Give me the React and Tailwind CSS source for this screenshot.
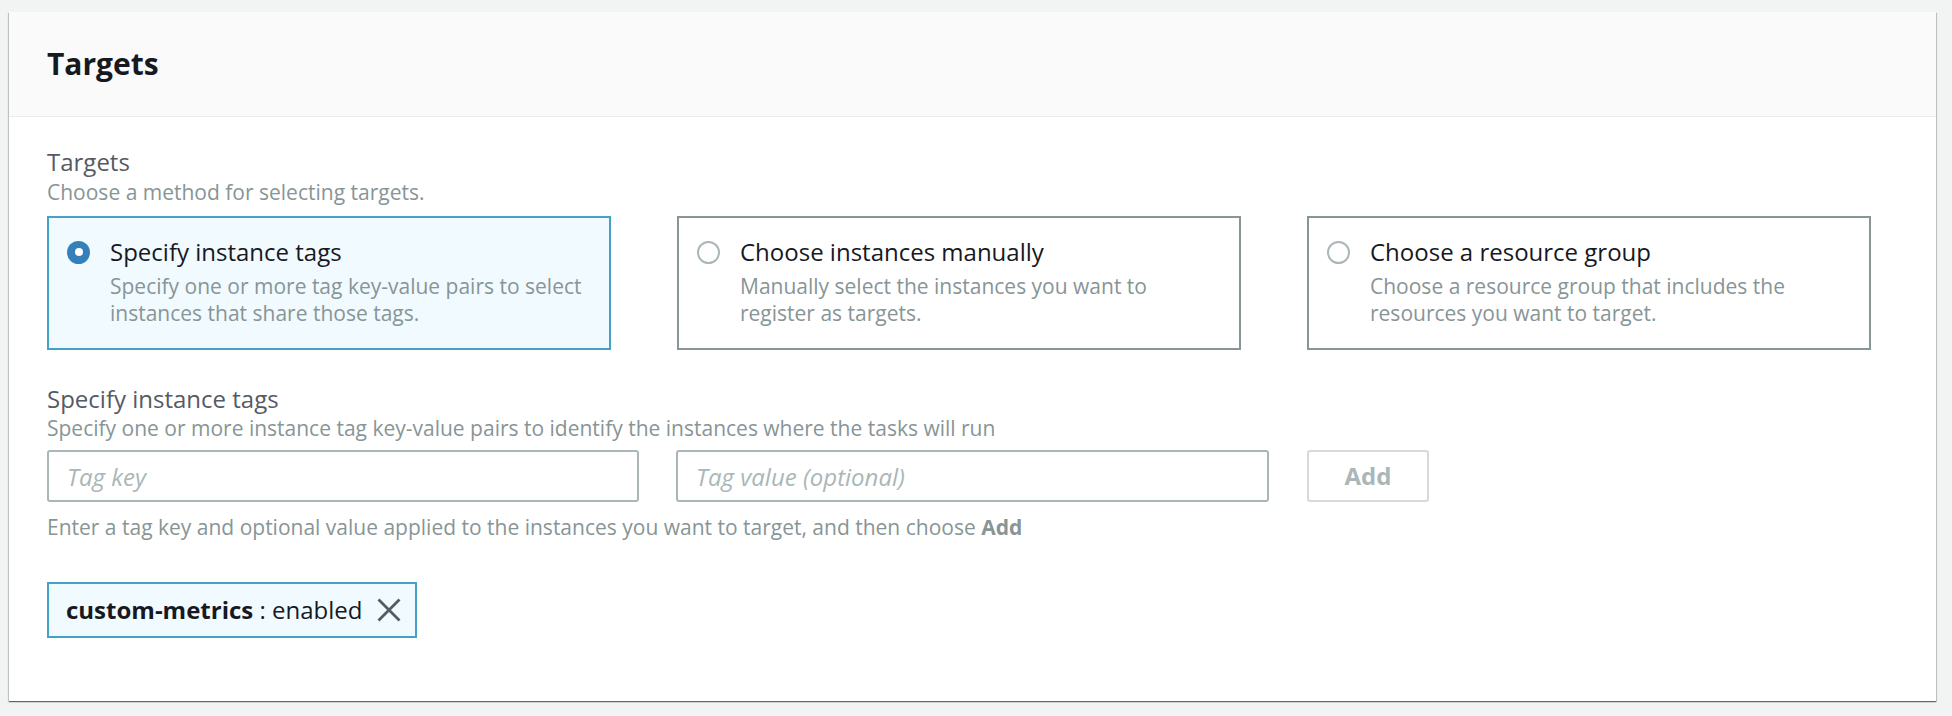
export default function App() {
  const tiles = [
    {
      title: "Specify instance tags",
      desc: ["Specify one or more tag key-value pairs to select", "instances that share those tags."],
      selected: true,
    },
    {
      title: "Choose instances manually",
      desc: ["Manually select the instances you want to", "register as targets."],
      selected: false,
    },
    {
      title: "Choose a resource group",
      desc: ["Choose a resource group that includes the", "resources you want to target."],
      selected: false,
    },
  ];

  return (
    <div className="min-h-screen w-full bg-[#f2f3f3] pt-[12px] pl-[9px] pr-[16px] pb-[15px] font-['Open_Sans',sans-serif]">
      <div className="bg-white h-[689px] flex flex-col shadow-[0_1px_1px_0_rgba(0,28,36,0.5),1px_1px_1px_0_rgba(0,28,36,0.15),-1px_1px_1px_0_rgba(0,28,36,0.15)]">
        <div className="bg-[#fafafa] border-b border-[#eaeded] py-[32px] pl-[38px]">
          <h2 className="text-[30px] leading-[40px] font-bold text-[#16191f]">Targets</h2>
        </div>

        <div className="pl-[38px] pt-[29px]">
          <div className="text-[24px] leading-[32px] text-[#545b64]">Targets</div>
          <div className="text-[21px] leading-[28px] text-[#879596]">Choose a method for selecting targets.</div>

          <div className="mt-[10px] flex gap-[66px]">
            {tiles.map((t) => (
              <div
                key={t.title}
                className={
                  t.selected
                    ? "w-[564px] h-[134px] border-2 border-[#44a2c8] bg-[#f1faff] pl-[18px] pt-[16px] flex gap-[20px]"
                    : "w-[564px] h-[134px] border-2 border-[#879596] bg-white pl-[18px] pt-[16px] flex gap-[20px]"
                }
              >
                <div className="h-[36px] flex items-center shrink-0">
                  {t.selected ? (
                    <div className="w-[23px] h-[23px] rounded-full bg-[#3580bb] flex items-center justify-center">
                      <div className="w-[8px] h-[8px] rounded-full bg-white" />
                    </div>
                  ) : (
                    <div className="w-[23px] h-[23px] rounded-full border-2 border-[#aab7b8] bg-white" />
                  )}
                </div>
                <div>
                  <div className="text-[24px] leading-[36px] text-[#16191f]">{t.title}</div>
                  <div className="mt-[3px] text-[21px] leading-[27px] text-[#879596]">
                    <div>{t.desc[0]}</div>
                    <div>{t.desc[1]}</div>
                  </div>
                </div>
              </div>
            ))}
          </div>

          <div className="mt-[33px] text-[24px] leading-[31px] text-[#545b64]">Specify instance tags</div>
          <div className="text-[21px] leading-[28px] text-[#879596]">
            Specify one or more instance tag key-value pairs to identify the instances where the tasks will run
          </div>

          <div className="mt-[8px] flex items-center">
            <input
              placeholder="Tag key"
              className="w-[592px] h-[52px] border-2 border-[#aab7b8] rounded-[3px] pl-[18px] text-[24px] outline-none placeholder:italic placeholder:text-[#aab7b8]"
            />
            <input
              placeholder="Tag value (optional)"
              className="ml-[37px] w-[593px] h-[52px] border-2 border-[#aab7b8] rounded-[3px] pl-[18px] text-[24px] outline-none placeholder:italic placeholder:text-[#aab7b8]"
            />
            <button className="ml-[38px] w-[122px] h-[52px] border-2 border-[#d5dbdb] rounded-[3px] bg-white text-[24px] font-bold text-[#aab7b8]">
              Add
            </button>
          </div>

          <div className="mt-[11px] text-[21px] leading-[28px] text-[#879596]">
            Enter a tag key and optional value applied to the instances you want to target, and then choose{" "}
            <span className="font-bold">Add</span>
          </div>

          <div className="mt-[41px] inline-flex items-center h-[56px] border-2 border-[#44a2c8] bg-[#f1faff] pl-[17px] pr-[14px]">
            <span className="text-[24px] text-[#16191f]">
              <span className="font-bold">custom-metrics</span> : enabled
            </span>
            <svg className="ml-[15px]" width="24" height="24" viewBox="0 0 24 24" fill="none">
              <path d="M1.5 1.5 L22.5 22.5 M22.5 1.5 L1.5 22.5" stroke="#545b64" strokeWidth="2.8" strokeLinecap="butt" />
            </svg>
          </div>
        </div>
      </div>
    </div>
  );
}
